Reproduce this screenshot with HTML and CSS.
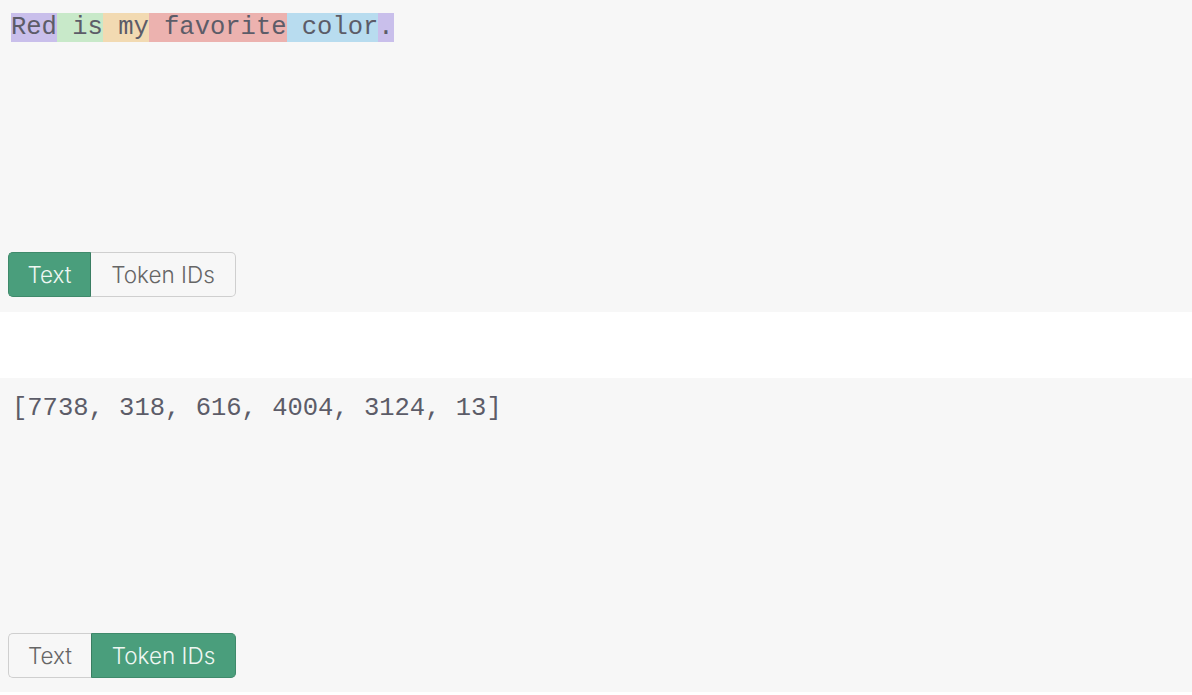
FILE: index.html
```html
<!DOCTYPE html>
<html>
<head>
<meta charset="utf-8">
<link rel="stylesheet" href="styles.css">
</head>
<body>
<div class="page">
  <section class="panel panel-top">
    <div class="tokens"><span class="tok t-purple">Red</span><span class="tok t-green"> is</span><span class="tok t-orange"> my</span><span class="tok t-red"> favorite</span><span class="tok t-blue"> color</span><span class="tok t-purple">.</span></div>
    <div class="toggle">
      <button class="btn btn-left active">Text</button>
      <button class="btn btn-right">Token IDs</button>
    </div>
  </section>
  <div class="spacer"></div>
  <section class="panel panel-bottom">
    <div class="ids">[7738, 318, 616, 4004, 3124, 13]</div>
    <div class="toggle">
      <button class="btn btn-left">Text</button>
      <button class="btn btn-right active">Token IDs</button>
    </div>
  </section>
</div>
</body>
</html>
```
FILE: styles.css
```css
html, body {
  margin: 0;
  padding: 0;
  background: #ffffff;
}
.page {
  width: 1192px;
  height: 695px;
  display: flex;
  flex-direction: column;
}
.panel {
  background: #f7f7f7;
  display: flex;
  flex-direction: column;
  justify-content: space-between;
  box-sizing: border-box;
  padding-left: 8px;
}
.panel-top {
  height: 312px;
  padding-top: 13px;
  padding-bottom: 15px;
}
.spacer {
  height: 66px;
}
.panel-bottom {
  height: 314px;
  padding-top: 13px;
  padding-bottom: 14px;
}
.tokens, .ids {
  font-family: "Liberation Mono", "DejaVu Sans Mono", monospace;
  font-size: 25.5px;
  line-height: 29px;
  color: #5c5c68;
  white-space: pre;
  padding-left: 3px;
}
.ids {
  padding-left: 4px;
  padding-top: 3px;
}
.tok {
  display: inline-block;
}
.t-purple { background: #c9bfeb; }
.t-green { background: #c8e9c9; }
.t-orange { background: #f2dab2; }
.t-red { background: #ecb2af; }
.t-blue { background: #b8dcef; }
.toggle {
  display: flex;
  width: 228px;
  height: 45px;
}
.btn {
  font-family: Inter, "Noto Sans", sans-serif;
  font-size: 22.5px;
  font-weight: 300;
  color: #666666;
  background: #f7f7f7;
  border: 1.5px solid #cfcfcf;
  margin: 0;
  padding: 0;
  height: 45px;
  cursor: pointer;
}
.btn-left {
  width: 83px;
  border-radius: 5px 0 0 5px;
  border-right: none;
}
.btn-right {
  width: 145px;
  border-radius: 0 5px 5px 0;
  border-left: none;
}
.btn.active {
  background: #4a9e7c;
  color: #eef7f2;
  border-color: #3f8a6b;
}
.btn-left.active {
  border-right: 1px solid #3a7d62;
}
.btn-right.active {
  border-left: 1px solid #3a7d62;
}
```
